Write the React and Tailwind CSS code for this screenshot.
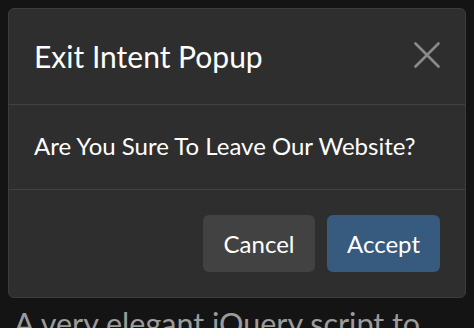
export default function App() {
  return (
    <div
      className="w-[474px] h-[328px] overflow-hidden bg-[#141414] pt-[8px] pl-[8px]"
      style={{ fontFamily: "Lato, 'Open Sans', sans-serif" }}
    >
      <div className="w-[458px] rounded-[6px] border border-[#3c3c3c] bg-[#2e2e2e] flex flex-col">
        <div className="h-[96px] flex items-center justify-between pl-[25px] pr-[24px] border-b border-[#424242]">
          <h1 className="text-[30px] leading-none text-white pb-[1px]">Exit Intent Popup</h1>
          <svg width="26" height="26" viewBox="0 0 26 26" className="mr-[1px] mb-[3px]">
            <path d="M1.5 1.5 L24.5 24.5 M24.5 1.5 L1.5 24.5" stroke="#8a8a8a" strokeWidth="2.6" strokeLinecap="round" />
          </svg>
        </div>
        <div className="h-[85px] flex items-center pl-[25px] border-b border-[#424242]">
          <p className="text-[24px] leading-none text-white pb-[2px]">Are You Sure To Leave Our Website?</p>
        </div>
        <div className="h-[107px] flex items-center justify-end gap-[12px] pr-[25px]">
          <button className="w-[112px] h-[57px] rounded-[6px] bg-[#424242] text-white text-[24px]">Cancel</button>
          <button className="w-[113px] h-[57px] rounded-[6px] bg-[#375a7f] text-white text-[24px]">Accept</button>
        </div>
      </div>
      <p className="text-[30.5px] leading-none text-[#9c9c9c] whitespace-nowrap mt-[10px] pl-[6px]">
        A very elegant jQuery script to
      </p>
    </div>
  );
}
